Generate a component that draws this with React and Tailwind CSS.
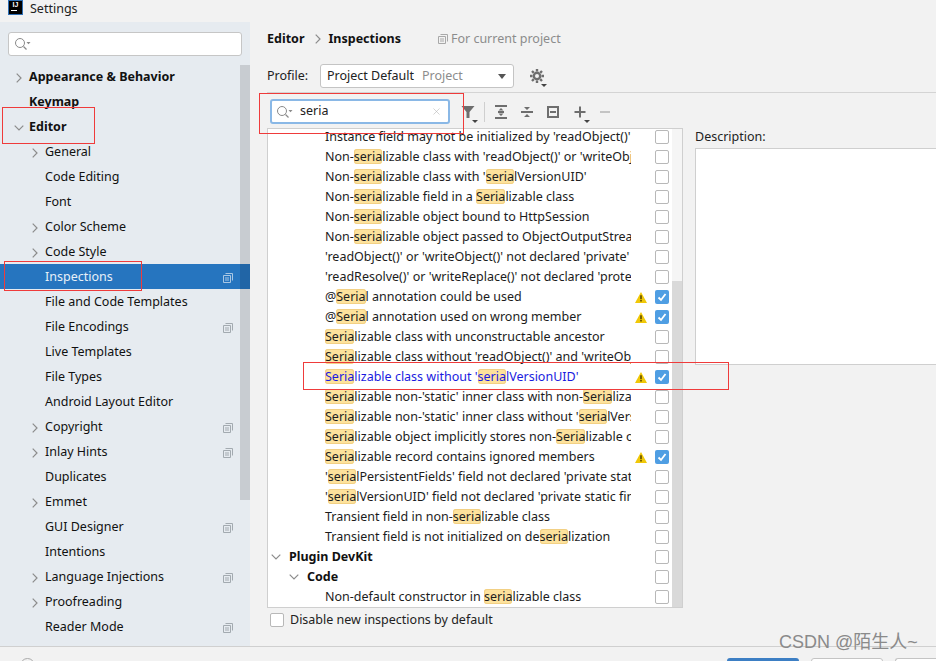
import { X } from "lucide-react";

const font = "font-['Noto_Sans','Liberation_Sans',sans-serif]";

const treeItems = [
  { label: "Appearance & Behavior", bold: true, arrow: "right", indent: 0 },
  { label: "Keymap", bold: true, indent: 0 },
  { label: "Editor", bold: true, arrow: "down", indent: 0 },
  { label: "General", arrow: "right", indent: 1 },
  { label: "Code Editing", indent: 1 },
  { label: "Font", indent: 1 },
  { label: "Color Scheme", arrow: "right", indent: 1 },
  { label: "Code Style", arrow: "right", indent: 1 },
  { label: "Inspections", indent: 1, copy: true, selected: true },
  { label: "File and Code Templates", indent: 1 },
  { label: "File Encodings", indent: 1, copy: true },
  { label: "Live Templates", indent: 1 },
  { label: "File Types", indent: 1 },
  { label: "Android Layout Editor", indent: 1 },
  { label: "Copyright", arrow: "right", indent: 1, copy: true },
  { label: "Inlay Hints", arrow: "right", indent: 1, copy: true },
  { label: "Duplicates", indent: 1 },
  { label: "Emmet", arrow: "right", indent: 1 },
  { label: "GUI Designer", indent: 1, copy: true },
  { label: "Intentions", indent: 1 },
  { label: "Language Injections", arrow: "right", indent: 1, copy: true },
  { label: "Proofreading", arrow: "right", indent: 1 },
  { label: "Reader Mode", indent: 1, copy: true },
];

const rows = [
  { text: "Instance field may not be initialized by 'readObject()' or 'readResolve()'" },
  { text: "Non-serializable class with 'readObject()' or 'writeObject()'" },
  { text: "Non-serializable class with 'serialVersionUID'" },
  { text: "Non-serializable field in a Serializable class" },
  { text: "Non-serializable object bound to HttpSession" },
  { text: "Non-serializable object passed to ObjectOutputStream" },
  { text: "'readObject()' or 'writeObject()' not declared 'private'" },
  { text: "'readResolve()' or 'writeReplace()' not declared 'protected'" },
  { text: "@Serial annotation could be used", on: true },
  { text: "@Serial annotation used on wrong member", on: true },
  { text: "Serializable class with unconstructable ancestor" },
  { text: "Serializable class without 'readObject()' and 'writeObject()'" },
  { text: "Serializable class without 'serialVersionUID'", on: true, blue: true },
  { text: "Serializable non-'static' inner class with non-Serializable outer class" },
  { text: "Serializable non-'static' inner class without 'serialVersionUID'" },
  { text: "Serializable object implicitly stores non-Serializable objects" },
  { text: "Serializable record contains ignored members", on: true },
  { text: "'serialPersistentFields' field not declared 'private static final ObjectStreamField[]'" },
  { text: "'serialVersionUID' field not declared 'private static final long'" },
  { text: "Transient field in non-serializable class" },
  { text: "Transient field is not initialized on deserialization" },
  { text: "Plugin DevKit", group: 0 },
  { text: "Code", group: 1 },
  { text: "Non-default constructor in serializable class" },
];

const ArrowRight = ({ className }) => (
  <svg width="6" height="10" viewBox="0 0 6 10" fill="none" className={className}>
    <path d="M.7.7 5 5 .7 9.3" stroke="#8c8c8c" strokeWidth="1.2" />
  </svg>
);

const ArrowDown = ({ className }) => (
  <svg width="10" height="6" viewBox="0 0 10 6" fill="none" className={className}>
    <path d="M.7.7 5 5 9.3.7" stroke="#8c8c8c" strokeWidth="1.2" />
  </svg>
);

const CopyIcon = ({ className }) => (
  <svg width="10" height="10" viewBox="0 0 10 10" fill="none" className={className}>
    <path d="M2.5 .5h7v7M.5 2.5h7v7h-7z" stroke="currentColor" />
    <path d="M2 5h4M2 7h4" stroke="currentColor" />
  </svg>
);

const Highlighted = ({ text }) =>
  text.split(/(seria)/i).map((part, i) =>
    /^seria$/i.test(part) ? (
      <span key={i} className="inline-block h-[15px] rounded-[3px] bg-[#fde29c] leading-[15px] ring-1 ring-inset ring-[#f2d084]">
        {part}
      </span>
    ) : (
      <span key={i}>{part}</span>
    )
  );

const Checkbox = ({ on }) =>
  on ? (
    <span className="flex h-[14px] w-[14px] items-center justify-center rounded-[2px] bg-[#4f9ee3]">
      <svg width="10" height="10" viewBox="0 0 10 10" fill="none">
        <path d="M1.5 5.5 4 8l4.5-6" stroke="white" strokeWidth="1.8" />
      </svg>
    </span>
  ) : (
    <span className="block h-[14px] w-[14px] rounded-[2px] border border-[#b8b8b8] bg-white" />
  );

const Warning = () => (
  <svg width="12" height="11" viewBox="0 0 12 11">
    <path d="M6 0 12 11H0z" fill="#f0c808" />
    <path d="M5.2 3.2h1.6v4H5.2zM5.2 8h1.6v1.6H5.2z" fill="#5c4a00" />
  </svg>
);

const ToolIcon = ({ children, menu }) => (
  <span className="relative flex h-4 w-4 items-center justify-center text-[#6e6e6e]">
    <svg width="16" height="16" viewBox="0 0 16 16" fill="none" stroke="currentColor" strokeWidth="2">
      {children}
    </svg>
    {menu && (
      <span className="absolute -bottom-[3px] -right-[2px] h-0 w-0 border-x-[3px] border-t-[3px] border-x-transparent border-t-[#444]" />
    )}
  </span>
);

const SearchGlyph = () => (
  <svg width="18" height="14" viewBox="0 0 18 14" fill="none" className="shrink-0">
    <circle cx="6" cy="6" r="4.5" stroke="#8a8a8a" />
    <path d="m9.5 9.5 3 3" stroke="#8a8a8a" strokeWidth="1.2" />
    <path d="M12.5 5h4l-2 2.2z" fill="#8a8a8a" />
  </svg>
);

const Sidebar = () => (
  <aside className="relative flex w-[250px] shrink-0 flex-col bg-[#e6ebf0]">
    <div className="mx-2 mt-[10px] flex h-[24px] items-center rounded-[3px] border border-[#c6c6c6] bg-white px-[5px]">
      <SearchGlyph />
    </div>
    <div className="relative mt-[8px] flex-1 overflow-hidden">
      {treeItems.map((item) => (
        <div
          key={item.label}
          className={`flex h-[25px] items-center pt-[2px] ${item.indent ? "pl-[28px]" : "pl-[12px]"} ${
            item.selected ? "bg-[#2675bf] text-[#e8f0f8]" : "text-[#111]"
          }`}
        >
          <span className="flex w-[17px] shrink-0 items-center">
            {item.arrow === "right" && <ArrowRight className="ml-[4px]" />}
            {item.arrow === "down" && <ArrowDown className="ml-[2px]" />}
          </span>
          <span className={`whitespace-nowrap ${item.bold ? "font-bold" : ""}`}>{item.label}</span>
          {item.copy && (
            <CopyIcon className={`ml-auto mr-[17px] ${item.selected ? "text-[#a9c7e4]" : "text-[#a3aab0]"}`} />
          )}
        </div>
      ))}
      <div className="absolute right-0 top-[1px] h-[435px] w-[10px] bg-black/[0.13]" />
    </div>
  </aside>
);

const InspectionRow = ({ row }) => {
  const isGroup = row.group !== undefined;
  return (
    <div className="flex h-[20px] shrink-0 items-center">
      <div className="w-[363px] shrink-0 overflow-hidden whitespace-nowrap">
        {isGroup ? (
          <div className={`flex items-center font-bold text-[#111] ${row.group ? "pl-[21px]" : "pl-[3px]"}`}>
            <ArrowDown className="mr-[8px]" />
            {row.text}
          </div>
        ) : (
          <div className={`pl-[57px] ${row.blue ? "text-[#1a1ae0]" : "text-[#1c1c1c]"}`}>
            <Highlighted text={row.text} />
          </div>
        )}
      </div>
      <span className="ml-[4px] flex w-[12px] shrink-0 justify-center">{row.on && <Warning />}</span>
      <span className="ml-[8px] shrink-0">
        <Checkbox on={row.on} />
      </span>
    </div>
  );
};

const Main = () => (
  <main className="flex min-w-0 flex-1 flex-col pl-[17px]">
    <div className="flex h-[32px] items-center pt-[2px]">
      <span className="font-bold text-[#111]">Editor</span>
      <ArrowRight className="ml-[11px] mr-[7px]" />
      <span className="font-bold text-[#111]">Inspections</span>
      <CopyIcon className="ml-[37px] mr-[3px] text-[#a8a8a8]" />
      <span className="text-[#8c8c8c]">For current project</span>
    </div>
    <div className="mt-[10px] flex h-[24px] items-center">
      <span className="w-[53px] text-[#222]">Profile:</span>
      <div className="flex h-[24px] w-[194px] items-center rounded-[3px] border border-[#c4c4c4] bg-white pl-[6px] pr-[4px]">
        <span className="text-[#222]">Project Default</span>
        <span className="ml-[8px] text-[#8c8c8c]">Project</span>
        <span className="ml-auto mr-[3px] h-0 w-0 border-x-[4px] border-t-[5px] border-x-transparent border-t-[#555]" />
      </div>
      <span className="ml-[15px]">
        <ToolIcon menu>
          <circle cx="8" cy="8" r="3.2" strokeWidth="2.4" />
          <path d="M8 1v2.5M8 12.5V15M1 8h2.5M12.5 8H15M3 3l1.8 1.8M11.2 11.2 13 13M13 3l-1.8 1.8M4.8 11.2 3 13" strokeWidth="2.4" />
        </ToolIcon>
      </span>
    </div>
    <div className="mt-[4px] h-px bg-[#d4d4d4]" />
    <div className="mt-[6px] flex h-[25px] items-center">
      <div className="ml-[3px] flex h-[25px] w-[180px] items-center rounded-[3px] border-2 border-[#8ab8e6] bg-white pl-[4px] pr-[6px]">
        <SearchGlyph />
        <span className="ml-[6px] text-[#222]">seria</span>
        <X size={11} strokeWidth={1.2} className="ml-auto text-[#b0b0b0]" />
      </div>
      <span className="ml-[10px]">
        <ToolIcon menu>
          <path d="M1.5 2h13L9.5 8v6h-3V8z" fill="currentColor" stroke="none" />
        </ToolIcon>
      </span>
      <span className="ml-[8px] h-[20px] w-px bg-[#cfcfcf]" />
      <span className="ml-[8px]">
        <ToolIcon>
          <path d="M2 2h12M2 14h12M5 8h6" />
          <path d="M8 4 5.5 6.5h5zM8 12l-2.5-2.5h5z" fill="currentColor" stroke="none" />
        </ToolIcon>
      </span>
      <span className="ml-[10px]">
        <ToolIcon>
          <path d="M2 8h12" />
          <path d="M8 6 5 3h6zM8 10l-3 3h6z" fill="currentColor" stroke="none" />
        </ToolIcon>
      </span>
      <span className="ml-[10px]">
        <ToolIcon>
          <rect x="3" y="3" width="10" height="10" />
          <path d="M5 8h6" />
        </ToolIcon>
      </span>
      <span className="ml-[11px]">
        <ToolIcon menu>
          <path d="M8 2.5v11M2.5 8h11" />
        </ToolIcon>
      </span>
      <span className="ml-[9px] flex h-4 w-4 items-center justify-center">
        <span className="h-[2px] w-[10px] bg-[#c4c4c4]" />
      </span>
    </div>
    <div className="mt-[4px] flex gap-[12px]">
      <div>
        <div className="relative flex h-[480px] w-[416px] overflow-hidden border border-[#cfcfcf] bg-white">
          <div className="-mt-[2px] flex flex-1 flex-col">
            {rows.map((row) => (
              <InspectionRow key={row.text} row={row} />
            ))}
          </div>
          <div className="flex w-[10px] shrink-0 flex-col bg-[#f5f5f5]">
            <div className="mt-[152px] flex-1 bg-[#d9d9d9]" />
          </div>
        </div>
        <div className="mt-[4px] flex h-[16px] items-center pl-[3px]">
          <Checkbox />
          <span className="ml-[6px] text-[#222]">Disable new inspections by default</span>
        </div>
      </div>
      <div className="flex-1">
        <div className="flex h-[20px] items-center pb-[2px] text-[#222]">Description:</div>
        <div className="h-[217px] border border-r-0 border-[#cfcfcf] bg-white" />
      </div>
    </div>
  </main>
);

const Footer = () => (
  <footer className="flex h-[15px] shrink-0 items-start overflow-hidden border-t border-[#d0d0d0] pl-[20px] pt-[11px]">
    <span className="h-[15px] w-[15px] rounded-full border border-[#aaa]" />
    <span className="ml-auto h-[24px] w-[72px] rounded-[3px] bg-[#3d7fc4]" />
    <span className="ml-[12px] h-[24px] w-[72px] rounded-[3px] border border-[#c4c4c4] bg-white" />
    <span className="ml-[12px] h-[24px] w-[41px] rounded-l-[3px] border border-r-0 border-[#c4c4c4] bg-white" />
  </footer>
);

export default function App() {
  return (
    <div className={`relative flex h-[661px] w-[936px] flex-col overflow-hidden bg-[#f2f2f2] text-[12.5px] ${font}`}>
      <header className="flex h-[22px] shrink-0 items-start pl-[8px]">
        <span className="flex h-[15px] w-[15px] flex-col items-center bg-black font-['Liberation_Sans',sans-serif] text-[7px] font-bold leading-[9px] text-white outline outline-1 -outline-offset-1 outline-[#2f6fb5]">
          IJ
          <span className="ml-[-4px] mt-[1px] h-px w-[6px] bg-white" />
        </span>
        <span className="ml-[7px] text-[#222]">Settings</span>
      </header>
      <div className="flex min-h-0 flex-1">
        <Sidebar />
        <Main />
      </div>
      <Footer />

      {/* red annotation boxes drawn over the screenshot */}
      <div className="absolute left-[2px] top-[107px] h-[37px] w-[93px] border border-[#ef3b3b]" />
      <div className="absolute left-[4px] top-[261px] h-[30px] w-[138px] border border-[#ef3b3b]" />
      <div className="absolute left-[259px] top-[93px] h-[41px] w-[205px] border border-[#ef3b3b]" />
      <div className="absolute left-[303px] top-[362px] h-[28px] w-[426px] border border-[#ef3b3b]" />

      <div className="absolute left-[779px] top-[629px] font-['Liberation_Sans','Noto_Sans_CJK_SC',sans-serif] text-[18px] text-[#8a8a8a]">
        CSDN @陌生人~
      </div>
    </div>
  );
}
